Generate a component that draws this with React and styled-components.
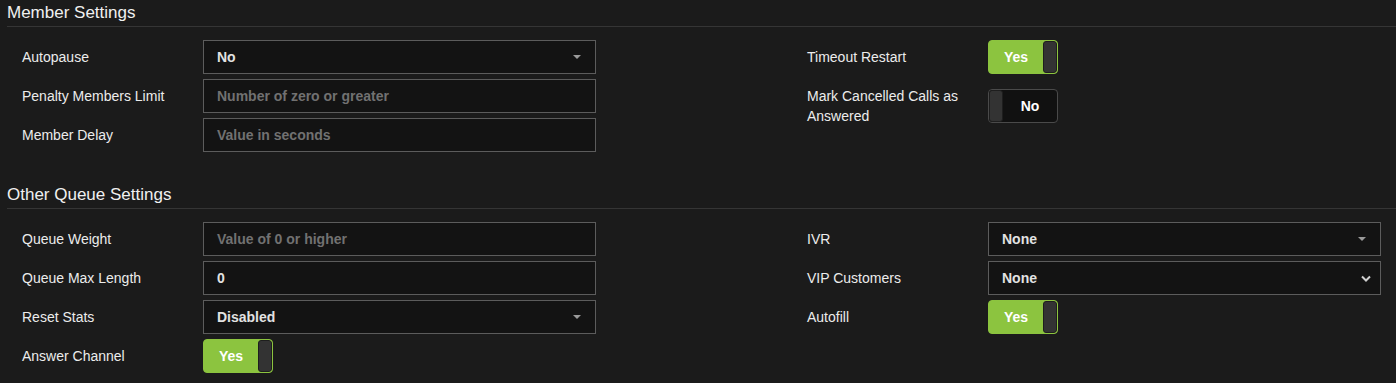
import styled, { createGlobalStyle } from 'styled-components';

const GlobalStyle = createGlobalStyle`
  html, body {
    margin: 0;
    padding: 0;
    background: #1b1b1b;
  }
  body {
    font-family: "Liberation Sans", Arial, sans-serif;
    color: #e6e6e6;
  }
`;

function Caret() {
  return (
    <CaretIcon width="8" height="4" viewBox="0 0 8 4">
      <path d="M0 0 L8 0 L4 4 Z" fill="#9a9a9a" />
    </CaretIcon>
  );
}

function Chevron() {
  return (
    <ChevronIcon width="10" height="7" viewBox="0 0 10 7">
      <path d="M1 1.5 L5 5.5 L9 1.5" fill="none" stroke="#d0d0d0" strokeWidth="2" />
    </ChevronIcon>
  );
}

function Field({ label, children }) {
  return (
    <Row>
      <Label>{label}</Label>
      {children}
    </Row>
  );
}

function TextBox({ value, placeholder }) {
  return (
    <Box>
      {value ? <Value>{value}</Value> : <Placeholder>{placeholder}</Placeholder>}
    </Box>
  );
}

function Select({ value, native }) {
  return (
    <Box>
      <Value>{value}</Value>
      {native ? <Chevron /> : <Caret />}
    </Box>
  );
}

function Toggle({ on }) {
  return (
    <ToggleBox $on={on}>
      {!on && <Knob />}
      <ToggleText>{on ? 'Yes' : 'No'}</ToggleText>
      {on && <Knob />}
    </ToggleBox>
  );
}

export default function App() {
  return (
    <Page>
      <GlobalStyle />
      <Section>
        <Heading>Member Settings</Heading>
        <Body>
          <Column>
            <Field label="Autopause">
              <Select value="No" />
            </Field>
            <Field label="Penalty Members Limit">
              <TextBox placeholder="Number of zero or greater" />
            </Field>
            <Field label="Member Delay">
              <TextBox placeholder="Value in seconds" />
            </Field>
          </Column>
          <Column>
            <Field label="Timeout Restart">
              <Toggle on />
            </Field>
            <Field label="Mark Cancelled Calls as Answered">
              <Toggle />
            </Field>
          </Column>
        </Body>
      </Section>

      <Section>
        <Heading>Other Queue Settings</Heading>
        <Body>
          <Column>
            <Field label="Queue Weight">
              <TextBox placeholder="Value of 0 or higher" />
            </Field>
            <Field label="Queue Max Length">
              <TextBox value="0" />
            </Field>
            <Field label="Reset Stats">
              <Select value="Disabled" />
            </Field>
            <Field label="Answer Channel">
              <Toggle on />
            </Field>
          </Column>
          <Column>
            <Field label="IVR">
              <Select value="None" />
            </Field>
            <Field label="VIP Customers">
              <Select value="None" native />
            </Field>
            <Field label="Autofill">
              <Toggle on />
            </Field>
          </Column>
        </Body>
      </Section>
    </Page>
  );
}

const Page = styled.div`
  width: 1396px;
  padding-left: 7px;
  box-sizing: border-box;
`;

const Section = styled.section`
  margin-bottom: 30px;

  &:last-child {
    margin-bottom: 0;
  }
`;

const Heading = styled.h2`
  margin: 0;
  font-size: 17px;
  font-weight: normal;
  line-height: 26px;
  color: #f0f0f0;
  border-bottom: 1px solid #353535;
`;

const Body = styled.div`
  display: grid;
  grid-template-columns: 785px 1fr;
  padding: 13px 0 0 15px;
`;

const Column = styled.div`
  display: flex;
  flex-direction: column;
  gap: 5px;
`;

const Row = styled.div`
  display: flex;
  align-items: center;
`;

const Label = styled.div`
  width: 181px;
  flex-shrink: 0;
  padding: 7px 20px 7px 0;
  box-sizing: border-box;
  font-size: 14px;
  line-height: 20px;
  color: #ececec;
`;

const Box = styled.div`
  width: 393px;
  height: 34px;
  box-sizing: border-box;
  display: flex;
  align-items: center;
  justify-content: space-between;
  padding: 0 12px 0 13px;
  background: #131313;
  border: 1px solid #5c5c5c;
  font-size: 14px;
  font-weight: bold;
`;

const Value = styled.span`
  color: #e2e2e2;
`;

const Placeholder = styled.span`
  color: #717171;
`;

const CaretIcon = styled.svg`
  display: block;
  margin-right: 2px;
`;

const ChevronIcon = styled.svg`
  display: block;
  margin-right: -3px;
`;

const ToggleBox = styled.div`
  width: 70px;
  height: 34px;
  box-sizing: border-box;
  display: flex;
  border-radius: 4px;
  border: 1px solid ${(p) => (p.$on ? '#8cc43f' : '#4a4a4a')};
  background: ${(p) => (p.$on ? '#8cc43f' : '#111111')};
  overflow: hidden;
`;

const ToggleText = styled.span`
  flex: 1;
  display: flex;
  align-items: center;
  justify-content: center;
  font-size: 14px;
  font-weight: bold;
  color: #ffffff;
`;

const Knob = styled.span`
  width: 12px;
  background: #333333;
  border-radius: 3px;
  border: 1px solid #1e1e1e;
`;
